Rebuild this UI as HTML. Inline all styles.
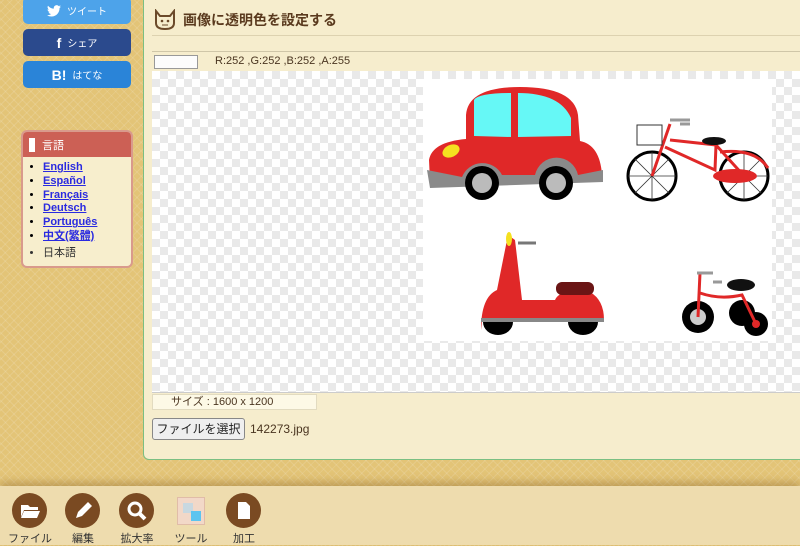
<!DOCTYPE html>
<html><head><meta charset="utf-8"><style>
*{margin:0;padding:0;box-sizing:border-box}
body{width:800px;height:545px;overflow:hidden;position:relative;font-family:"Liberation Sans","Noto Sans CJK JP",sans-serif;background:#e3c477;
background-image:repeating-linear-gradient(45deg,rgba(255,255,255,.12) 0 1px,transparent 1px 6px),repeating-linear-gradient(-45deg,rgba(255,255,255,.12) 0 1px,transparent 1px 6px);}
.btn{position:absolute;left:23px;width:108px;height:27px;border-radius:5px;color:#fff;font-size:10px;display:flex;align-items:center;justify-content:center;gap:6px}
.lang{position:absolute;left:21px;top:130px;width:112px;height:138px;border:2px solid #d99a8c;border-radius:6px;background:#f7eecd;overflow:hidden}
.lang .hd{background:#cc6055;height:25px;color:#fff;font-size:11px;display:flex;align-items:center;padding-left:6px}
.lang .hd i{display:inline-block;width:6px;height:14px;background:#fff;margin-right:7px}
.lang ul{padding:4px 0 0 20px;font-size:11px;line-height:13.8px}
.lang a{color:#2a2ae0;text-decoration:underline;font-weight:bold}
.main{position:absolute;left:143px;top:-10px;width:670px;height:470px;background:#f6edcd;border:1px solid #7bbf82;border-radius:6px}
.title{position:absolute;left:153px;top:9px;font-size:14px;font-weight:bold;color:#5a3a1e;display:flex;align-items:center;gap:6px}
.hr{position:absolute;left:152px;top:35px;width:648px;height:1px;background:#ddd2b0}
.bar{position:absolute;left:152px;top:51px;width:648px;height:20px;border-top:1px solid #cfc6a8;background:#f6edcd;font-size:11px;color:#4a3520}
.sw{position:absolute;left:2px;top:3px;width:44px;height:14px;background:#fcfcfc;border:1px solid #999}
.canvas{position:absolute;left:152px;top:71px;width:648px;height:322px;background-color:#fff;
background-image:linear-gradient(45deg,#e9e9e9 25%,transparent 25%,transparent 75%,#e9e9e9 75%),linear-gradient(45deg,#e9e9e9 25%,transparent 25%,transparent 75%,#e9e9e9 75%);background-size:16px 16px;background-position:0 0,8px 8px;border-bottom:1px solid #ccc}
.size{position:absolute;left:152px;top:394px;width:165px;height:16px;background:#fdf9e6;border:1px solid #e2dbc0;font-size:11px;color:#4a3520;padding-left:18px;line-height:14px}
.file{position:absolute;left:152px;top:418px;width:93px;height:22px;background:#efefef;border:1px solid #888;border-radius:3px;font-size:12px;color:#222;text-align:center;line-height:20px}
.fn{position:absolute;left:250px;top:422px;font-size:12px;color:#4a3520}
.foot{position:absolute;left:0;top:486px;width:800px;height:59px;background:#eedcae;box-shadow:0 -4px 8px rgba(120,80,20,.35)}
.ic{position:absolute;top:493px;width:35px;height:35px;border-radius:50%;background:#7a4a22}
.lb{position:absolute;top:530px;font-size:11px;color:#333;width:60px;text-align:center}
</style></head><body>
<div class="btn" style="top:-3px;background:#4da3ea"><svg width="14" height="12" viewBox="0 0 24 20"><path d="M24 2.4a10 10 0 0 1-2.8.8A5 5 0 0 0 23.3.4a10 10 0 0 1-3.1 1.2A4.9 4.9 0 0 0 11.8 6 14 14 0 0 1 1.7.9a4.9 4.9 0 0 0 1.5 6.6A4.900 4.900 0 0 1 1 6.9a4.9 4.9 0 0 0 3.9 4.8 5 5 0 0 1-2.2.1 4.9 4.9 0 0 0 4.6 3.4A9.900 9.900 0 0 1 0 17.2 14 14 0 0 0 7.5 19.4c9.100 0 14-7.500 14-14v-.6A10 10 0 0 0 24 2.400z" fill="#fff"/></svg>ツイート</div>
<div class="btn" style="top:29px;background:#2b4a8d"><b style="font-size:14px">f</b>シェア</div>
<div class="btn" style="top:61px;background:#2a84d8"><b style="font-size:14px">B!</b>はてな</div>
<div class="lang"><div class="hd"><i></i>言語</div>
<ul><li><a>English</a></li><li><a>Español</a></li><li><a>Français</a></li><li><a>Deutsch</a></li><li><a>Português</a></li><li><a>中文(繁體)</a></li><li style="margin-top:3px;color:#333">日本語</li></ul></div>
<div class="main"></div>
<div class="title"><svg width="24" height="22" viewBox="0 0 24 22"><path d="M3 2 L7 7 H17 L21 2 L21 14 Q21 20 12 20 Q3 20 3 14 Z" fill="none" stroke="#6b4a2a" stroke-width="2"/><circle cx="9" cy="12" r="1.3" fill="#6b4a2a"/><circle cx="15" cy="12" r="1.3" fill="#6b4a2a"/><path d="M9 16h6" stroke="#6b4a2a"/></svg>画像に透明色を設定する</div>
<div class="hr"></div>
<div class="bar"><div class="sw"></div><span style="position:absolute;left:63px;top:3px">R:252 ,G:252 ,B:252 ,A:255</span></div>
<div class="canvas"></div>
<svg style="position:absolute;left:0;top:0" width="800" height="545">
<rect x="423" y="79" width="349" height="262" fill="#fff"/>
<path d="M429 160 Q432 142 466 139 L466 115 Q468 87 520 87 Q574 87 578 115 L580 141 Q600 145 602 175 L430 182 Z" fill="#e02828"/>
<path d="M474 100 Q478 93 511 93 L511 137 L474 136 Z M518 93 Q560 93 571 118 L571 136 L518 137 Z" fill="#66f8f6"/>
<ellipse cx="451" cy="151" rx="9" ry="6" fill="#f5e020" transform="rotate(-25 451 151)"/>
<path d="M427 170 L462 177 A22 22 0 0 1 502 175 L535 175 A22 22 0 0 1 578 175 L603 170 L603 182 L430 188 Z" fill="#8a8a8a"/>
<circle cx="482" cy="183" r="17" fill="#000"/><circle cx="482" cy="183" r="10" fill="#bbb"/>
<circle cx="556" cy="183" r="17" fill="#000"/><circle cx="556" cy="183" r="10" fill="#bbb"/>
<g fill="none" stroke="#000" stroke-width="3"><circle cx="652" cy="176" r="24"/><circle cx="744" cy="176" r="24"/></g>
<g stroke="#333" stroke-width=".8"><path d="M628 176h48M652 152v48M635 159l34 34M669 159l-34 34M720 176h48M744 152v48M727 159l34 34M761 159l-34 34"/></g>
<g stroke="#e02828" stroke-width="3" fill="none"><path d="M652 176 L670 124 M665 147 L715 170 L716 145 L670 140 M744 176 L716 145 M720 152 Q755 148 768 168"/></g>
<ellipse cx="714" cy="141" rx="12" ry="4" fill="#111"/>
<ellipse cx="735" cy="176" rx="22" ry="7" fill="#e02828"/>
<rect x="637" y="125" width="25" height="20" fill="none" stroke="#333"/>
<path d="M670 120 h20 M680 124h10" stroke="#999" stroke-width="3"/>
<path d="M481 330 Q481 297 497 290 L508 235 L515 240 L522 300 L555 300 Q560 288 590 292 Q604 300 604 320 L482 322 Z" fill="#e02828"/>
<rect x="556" y="282" width="38" height="13" rx="6" fill="#6a1515"/>
<ellipse cx="509" cy="239" rx="3" ry="7" fill="#f5e020"/>
<path d="M518 243 H536" stroke="#777" stroke-width="3"/>
<rect x="481" y="318" width="123" height="4" fill="#888"/>
<path d="M483 322 a15 13 0 0 0 30 0 Z M568 322 a15 13 0 0 0 30 0 Z" fill="#000"/>
<circle cx="698" cy="317" r="16" fill="#000"/><circle cx="698" cy="317" r="8" fill="#ccc"/>
<circle cx="742" cy="313" r="13" fill="#000"/><circle cx="756" cy="324" r="12" fill="#000"/><circle cx="756" cy="324" r="4" fill="#e02828"/>
<g stroke="#e02828" stroke-width="3" fill="none"><path d="M698 317 L700 273 M700 293 Q720 300 742 295 L756 324"/></g>
<ellipse cx="741" cy="285" rx="14" ry="6" fill="#111"/>
<path d="M697 273 H713 M713 282 H722" stroke="#999" stroke-width="3"/>
</svg>
<div class="size">サイズ : 1600 x 1200</div>
<div class="file">ファイルを選択</div>
<div class="fn">142273.jpg</div>
<div class="foot"></div>
<div class="ic" style="left:12px"><svg width="35" height="35"><path d="M9 12h7l2 2h8v3H12l-3 7z M12 18h16l-3 7H9z" fill="#fff"/></svg></div>
<div class="ic" style="left:65px"><svg width="35" height="35"><path d="M11 25l2-6 10-10 4 4-10 10z" fill="#fff"/></svg></div>
<div class="ic" style="left:119px"><svg width="35" height="35"><circle cx="16" cy="16" r="6" fill="none" stroke="#fff" stroke-width="3"/><path d="M20 20l6 6" stroke="#fff" stroke-width="4"/></svg></div>
<div style="position:absolute;left:177px;top:497px;width:28px;height:28px;background:#f2d8c8;border:1px solid #e0bca8"><div style="position:absolute;left:5px;top:5px;width:10px;height:10px;background:#c8d8e0"></div><div style="position:absolute;left:13px;top:13px;width:10px;height:10px;background:#5cc4ef"></div></div>
<div class="ic" style="left:226px"><svg width="35" height="35"><path d="M12 9h8l4 4v13H12z" fill="#fff"/></svg></div>
<div class="lb" style="left:0">ファイル</div>
<div class="lb" style="left:53px">編集</div>
<div class="lb" style="left:107px">拡大率</div>
<div class="lb" style="left:161px">ツール</div>
<div class="lb" style="left:214px">加工</div>
</body></html>
